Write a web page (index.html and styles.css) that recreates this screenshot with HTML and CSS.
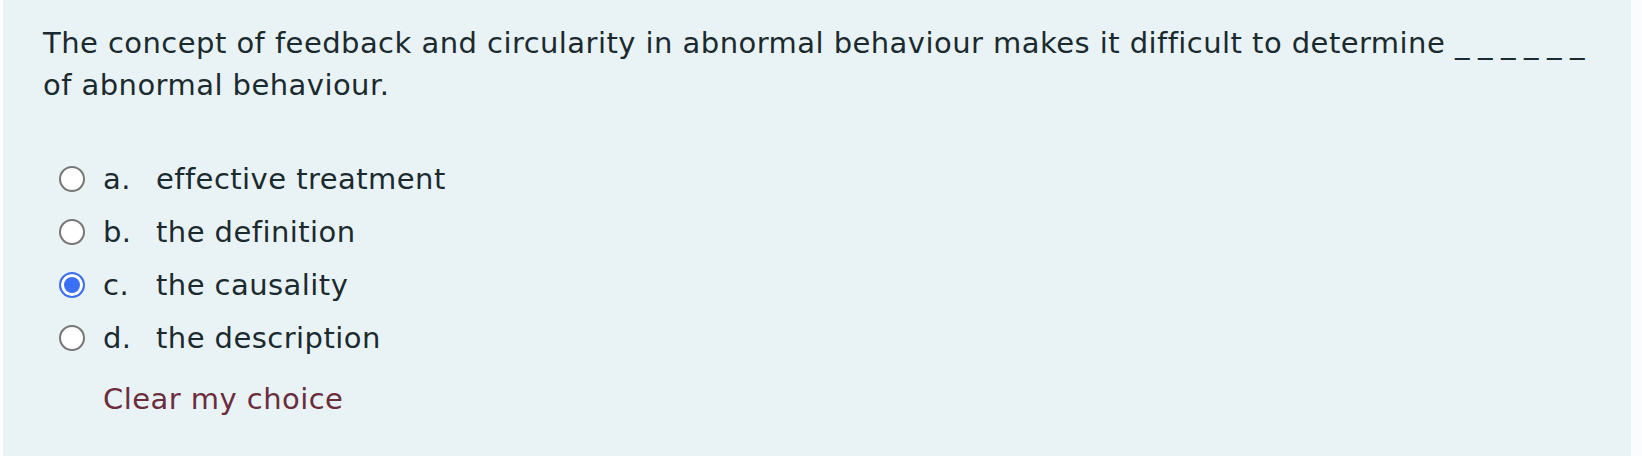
FILE: index.html
```html
<!DOCTYPE html>
<html lang="en">
<head>
<meta charset="utf-8">
<title>Question</title>
<link rel="stylesheet" href="styles.css">
</head>
<body>
<div class="page">
  <div class="formulation">
    <div class="qtext">The concept of feedback and circularity in abnormal behaviour makes it difficult to determine <span class="blank">______</span> of abnormal behaviour.</div>
    <div class="answers">
      <div class="answer">
        <span class="radio"></span>
        <span class="num">a.</span>
        <span class="label">effective treatment</span>
      </div>
      <div class="answer">
        <span class="radio"></span>
        <span class="num">b.</span>
        <span class="label">the definition</span>
      </div>
      <div class="answer">
        <span class="radio checked"></span>
        <span class="num">c.</span>
        <span class="label">the causality</span>
      </div>
      <div class="answer">
        <span class="radio"></span>
        <span class="num">d.</span>
        <span class="label">the description</span>
      </div>
    </div>
    <div class="clear">Clear my choice</div>
  </div>
</div>
</body>
</html>
```
FILE: styles.css
```css
html, body {
  margin: 0;
  padding: 0;
  background: #fbfcfe;
}
body {
  font-family: "DejaVu Sans", "Open Sans", sans-serif;
  color: #1b2a2e;
  letter-spacing: 0.45px;
}
.page {
  padding-left: 3px;
  width: 1628px;
}
.formulation {
  background: #e9f3f6;
  height: 456px;
  box-sizing: border-box;
  padding: 22px 30px 0 40px;
}
.qtext {
  font-size: 29px;
  line-height: 42px;
}
.blank {
  letter-spacing: 8.5px;
}
.answers {
  margin-top: 46px;
  display: flex;
  flex-direction: column;
}
.answer {
  display: flex;
  align-items: center;
  height: 53px;
  font-size: 29px;
}
.radio {
  width: 22px;
  height: 22px;
  border: 2px solid #767676;
  border-radius: 50%;
  background: #ffffff;
  margin-left: 16px;
  margin-right: 18px;
  flex: none;
}
.radio.checked {
  border-color: #3b6ff5;
  background: #3b6ff5;
  box-shadow: inset 0 0 0 3px #ffffff;
}
.num {
  width: 53px;
  flex: none;
}
.clear {
  margin-top: 14px;
  margin-left: 60px;
  font-size: 29px;
  line-height: 42px;
  color: #6b2d3c;
}
```
